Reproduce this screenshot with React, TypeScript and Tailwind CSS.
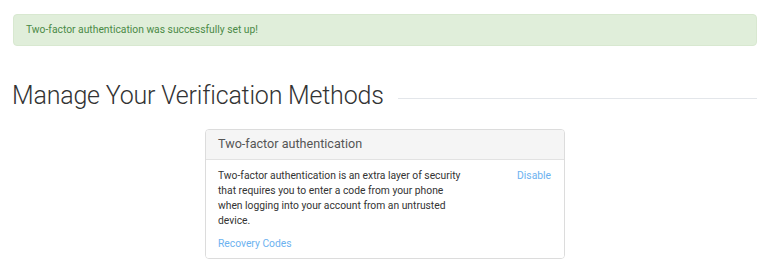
import React from "react";

export default function App() {
  return (
    <div className="w-[768px] h-[272px] bg-white overflow-hidden" style={{ fontFamily: "Roboto, 'Liberation Sans', sans-serif" }}>
      <div className="pt-[14px] px-[11px]">
        <div className="ml-[2px] w-[744px] h-[32px] rounded-[4px] bg-[#e0eeda] border border-[#d8e8d0] flex items-center pl-[12px] text-[10.3px] text-[#4a8a46]">
          Two-factor authentication was successfully set up!
        </div>
      </div>
      <div className="flex items-center mt-[35px] pl-[12px] pr-[11px]">
        <h1 className="text-[25px] font-light text-[#333] leading-[30px] tracking-[-0.2px]">Manage Your Verification Methods</h1>
        <div className="flex-1 h-px bg-[#e3e6ea] ml-[14px] mt-[4px]"></div>
      </div>
      <div className="mt-[18px] ml-[205px] w-[360px] rounded-[4px] border border-[#dcdcdc] overflow-hidden">
        <div className="h-[30px] bg-[#f5f5f5] border-b border-[#e2e2e2] flex items-center pl-[12px] text-[12.6px] text-[#555]">
          Two-factor authentication
        </div>
        <div className="px-[12px] pt-[8px] pb-[7px] bg-white">
          <div className="flex justify-between">
            <p className="w-[252px] text-[10.3px] leading-[15px] text-[#333]">
              Two-factor authentication is an extra layer of security that requires you to enter a code from your phone when logging into your account from an untrusted device.
            </p>
            <a className="text-[10.3px] leading-[15px] text-[#6cb2f0] pr-[1px]">Disable</a>
          </div>
          <a className="block mt-[8px] text-[10.3px] leading-[15px] text-[#6cb2f0]">Recovery Codes</a>
        </div>
      </div>
    </div>
  );
}
